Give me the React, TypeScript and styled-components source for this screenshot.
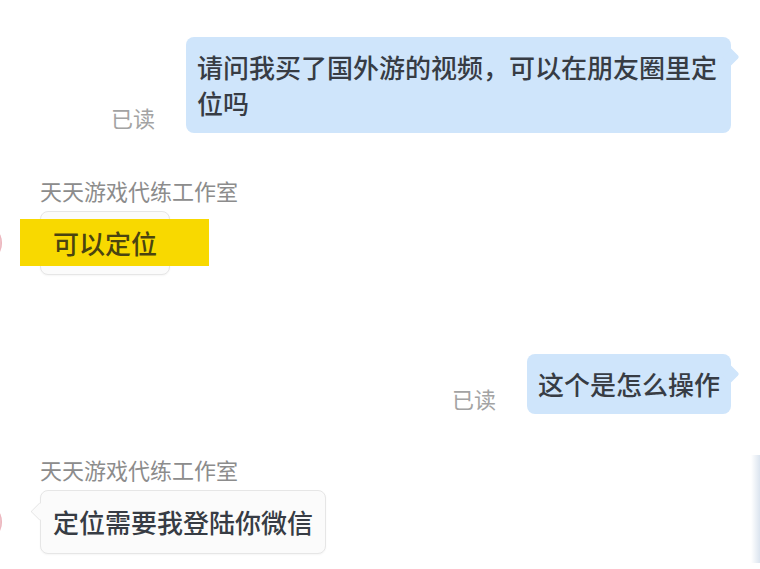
import React from 'react'
import styled, { createGlobalStyle, css } from 'styled-components'

const GlobalStyle = createGlobalStyle`
  html, body {
    margin: 0;
    padding: 0;
    background: #fff;
  }
  body {
    font-family: "Noto Sans CJK SC", "Noto Sans", sans-serif;
    overflow: hidden;
  }
`

const Screen = styled.div`
  position: relative;
  width: 760px;
  height: 569px;
  overflow: hidden;
  background: #fff;
`

const Thread = styled.div`
  display: flex;
  flex-direction: column;
  padding: 37px 29px 0 40px;
`

const OutRow = styled.div<{ $gap: number }>`
  display: flex;
  justify-content: flex-end;
  align-items: flex-end;
  gap: 31px;
  margin-top: ${({ $gap }) => $gap}px;
`

const InRow = styled.div<{ $gap: number }>`
  display: flex;
  align-items: flex-end;
  margin-top: ${({ $gap }) => $gap}px;
`

const InColumn = styled.div`
  display: flex;
  flex-direction: column;
  align-items: flex-start;
  gap: 9px;
`

// only the right rim of the avatar peeks in from the left edge
const Avatar = styled.div`
  flex: none;
  width: 40px;
  height: 40px;
  margin: 0 38px 12px -78px;
  border-radius: 50%;
  background: #fbf3f4;
  box-shadow: inset -2px 0 2px rgba(214, 96, 112, 0.45);
`

const ReadLabel = styled.span`
  font-size: 22px;
  line-height: 24px;
  color: #a3a3a3;
  margin-bottom: 4px;
`

const SenderName = styled.div`
  font-size: 22px;
  line-height: 24px;
  color: #8c8c8c;
`

const tail = css`
  content: '';
  position: absolute;
  top: 14px;
  width: 12px;
  height: 12px;
  transform: rotate(45deg);
`

const Bubble = styled.div<{ $mine?: boolean }>`
  position: relative;
  box-sizing: border-box;
  max-width: 545px;
  font-size: 26px;
  font-weight: 500;
  line-height: 36px;
  color: #373c44;
  border-radius: 8px;
  ${({ $mine }) =>
    $mine
      ? css`
          padding: 12px 11px;
          background: #cfe5fb;
          &::after {
            ${tail};
            right: -6px;
            background: #cfe5fb;
            border-radius: 0 2px 0 0;
          }
        `
      : css`
          padding: 13px 12px;
          background: #fbfbfb;
          border: 1px solid #e6e6e6;
          box-shadow: 0 1px 2px rgba(0, 0, 0, 0.04);
          &::after {
            ${tail};
            left: -8px;
            background: #fbfbfb;
            border-left: 1px solid #e6e6e6;
            border-bottom: 1px solid #e6e6e6;
            border-radius: 0 0 0 2px;
          }
        `}
`

const MarkedText = styled.span`
  position: relative;
  z-index: 3;
  color: #4a4410;
`

// highlighter stroke laid over a reply
const Highlight = styled.span`
  position: absolute;
  left: -21px;
  top: 7px;
  width: 189px;
  height: 47px;
  background: #f8d900;
  z-index: 2;
`

const EdgeStrip = styled.div`
  position: absolute;
  right: 0;
  top: 455px;
  width: 9px;
  height: 108px;
  background: linear-gradient(to right, #ffffff, #dbe4ef);
`

export default function App() {
  return (
    <Screen>
      <GlobalStyle />
      <Thread>
        <OutRow $gap={0}>
          <ReadLabel>已读</ReadLabel>
          <Bubble $mine>请问我买了国外游的视频，可以在朋友圈里定位吗</Bubble>
        </OutRow>

        <InRow $gap={45}>
          <Avatar />
          <InColumn>
            <SenderName>天天游戏代练工作室</SenderName>
            <Bubble>
              <MarkedText>可以定位</MarkedText>
              <Highlight />
            </Bubble>
          </InColumn>
        </InRow>

        <OutRow $gap={79}>
          <ReadLabel>已读</ReadLabel>
          <Bubble $mine>这个是怎么操作</Bubble>
        </OutRow>

        <InRow $gap={43}>
          <Avatar />
          <InColumn>
            <SenderName>天天游戏代练工作室</SenderName>
            <Bubble>定位需要我登陆你微信</Bubble>
          </InColumn>
        </InRow>
      </Thread>
      <EdgeStrip />
    </Screen>
  )
}
